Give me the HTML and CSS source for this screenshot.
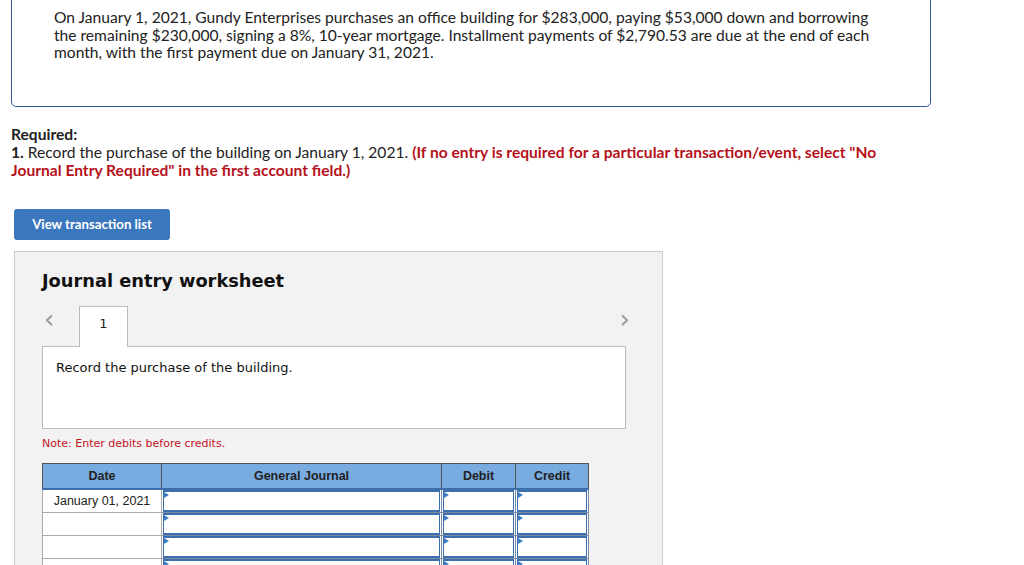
FILE: index.html
```html
<!DOCTYPE html>
<html lang="en">
<head>
    <meta charset="UTF-8">
    <title>Journal entry worksheet</title>
    <link rel="stylesheet" href="styles.css">
</head>
<body>

    <div class="question">
        <p>On January 1, 2021, Gundy Enterprises purchases an office building for $283,000, paying $53,000 down and borrowing the remaining $230,000, signing a 8%, 10-year mortgage. Installment payments of $2,790.53 are due at the end of each month, with the first payment due on January 31, 2021.</p>
    </div>

    <div class="required">
        <strong>Required:</strong><br>
        <strong>1.</strong> Record the purchase of the building on January 1, 2021. <span class="warn">(If no entry is required for a particular transaction/event, select "No Journal Entry Required" in the first account field.)</span>
    </div>

    <button type="button" class="btn-list">View transaction list</button>

    <div class="worksheet">
        <h2>Journal entry worksheet</h2>

        <div class="tabs">
            <span class="arrow">&lsaquo;</span>
            <div class="tab">1</div>
            <span class="arrow right">&rsaquo;</span>
        </div>

        <div class="tab-body">Record the purchase of the building.</div>

        <p class="note">Note: Enter debits before credits.</p>

        <table class="journal">
            <thead>
                <tr>
                    <th class="c-date">Date</th>
                    <th class="c-acct">General Journal</th>
                    <th class="c-debit">Debit</th>
                    <th class="c-credit">Credit</th>
                </tr>
            </thead>
            <tbody>
                <tr>
                    <td class="date">January 01, 2021</td>
                    <td class="in"><div class="box"></div></td>
                    <td class="in"><div class="box"></div></td>
                    <td class="in"><div class="box"></div></td>
                </tr>
                <tr>
                    <td class="date"></td>
                    <td class="in"><div class="box"></div></td>
                    <td class="in"><div class="box"></div></td>
                    <td class="in"><div class="box"></div></td>
                </tr>
                <tr>
                    <td class="date"></td>
                    <td class="in"><div class="box"></div></td>
                    <td class="in"><div class="box"></div></td>
                    <td class="in"><div class="box"></div></td>
                </tr>
                <tr>
                    <td class="date"></td>
                    <td class="in"><div class="box"></div></td>
                    <td class="in"><div class="box"></div></td>
                    <td class="in"><div class="box"></div></td>
                </tr>
            </tbody>
        </table>
    </div>

</body>
</html>
```

FILE: styles.css
```css
body {
    margin: 0;
    padding: 0 11px;
    font-family: Lato, "Liberation Sans", sans-serif;
    color: #222;
    background-color: #fff;
    overflow: hidden;
}

.question {
    width: 920px;
    margin-top: -30px;
    padding: 38px 0 44px 42px;
    border: 1px solid #2d5a96;
    border-radius: 5px;
    box-sizing: border-box;
}

.question p {
    margin: 0;
    width: 835px;
    font-size: 15.6px;
    line-height: 17.5px;
}

.required {
    margin-top: 18px;
    font-size: 15.6px;
    line-height: 18.4px;
    width: 885px;
}

.warn {
    color: #b5121b;
    font-weight: bold;
}

.btn-list {
    display: block;
    margin: 29px 0 0 3px;
    width: 156px;
    height: 31px;
    padding: 0;
    border: none;
    border-radius: 3px;
    background-color: #3a77bd;
    color: #fff;
    font-family: Lato, "Liberation Sans", sans-serif;
    font-size: 13.2px;
    font-weight: bold;
}

.worksheet {
    margin: 11px 0 0 3px;
    width: 649px;
    height: 400px;
    padding: 18px 0 0 27px;
    box-sizing: border-box;
    background-color: #f2f2f2;
    border: 1px solid #ccc;
    font-family: "DejaVu Sans", Verdana, sans-serif;
}

.worksheet h2 {
    margin: 0;
    font-size: 17.8px;
    font-weight: bold;
    color: #111;
}

.tabs {
    display: flex;
    align-items: center;
    width: 594px;
    margin-top: 15px;
    height: 40px;
}

.arrow {
    color: #999;
    font-size: 26px;
    width: 35px;
    padding-left: 2px;
    line-height: 20px;
    margin-top: -14px;
}

.arrow.right {
    margin-left: auto;
    width: auto;
    padding-right: 6px;
}

.tab {
    width: 49px;
    height: 41px;
    margin-bottom: -1px;
    box-sizing: border-box;
    background: #fff;
    border: 1px solid #bbb;
    border-bottom: none;
    text-align: center;
    font-size: 13px;
    line-height: 33px;
    position: relative;
    z-index: 1;
}

.tab-body {
    width: 584px;
    height: 83px;
    box-sizing: border-box;
    background: #fff;
    border: 1px solid #bbb;
    padding: 13px 13px;
    font-size: 13px;
    color: #111;
}

.note {
    margin: 8px 0 0;
    font-size: 11px;
    color: #c1121f;
}

.journal {
    margin-top: 13px;
    table-layout: fixed;
    border-collapse: collapse;
    font-family: "Liberation Sans", Arial, sans-serif;
    font-size: 12.5px;
}

.journal th {
    background-color: #78abe0;
    height: 24px;
    padding: 0;
    border: 1px solid #555;
    border-bottom: 2px solid #3d6ea8;
    color: #222;
    font-weight: bold;
}

.c-date { width: 118px; }
.c-acct { width: 279px; }
.c-debit { width: 73px; }
.c-credit { width: 72px; }

.journal td {
    padding: 0;
    height: 22px;
    border: 1px solid #999;
    background: #fff;
}

.journal td.date {
    text-align: center;
    color: #222;
    border-color: #aaa;
}

.journal td.in {
    border: 1px solid #7a8aa0;
    padding: 0 1px;
}

.box {
    position: relative;
    height: 18px;
    border-top: 2px solid #3b6fae;
    border-bottom: 2px solid #3b6fae;
    border-left: 1px solid #3b6fae;
    border-right: 1px solid #3b6fae;
    background: #fff;
}

.box::before {
    content: "";
    position: absolute;
    left: 0;
    top: 0;
    border-left: 5px solid #3b7cc4;
    border-top: 3px solid transparent;
    border-bottom: 3px solid transparent;
}
```
